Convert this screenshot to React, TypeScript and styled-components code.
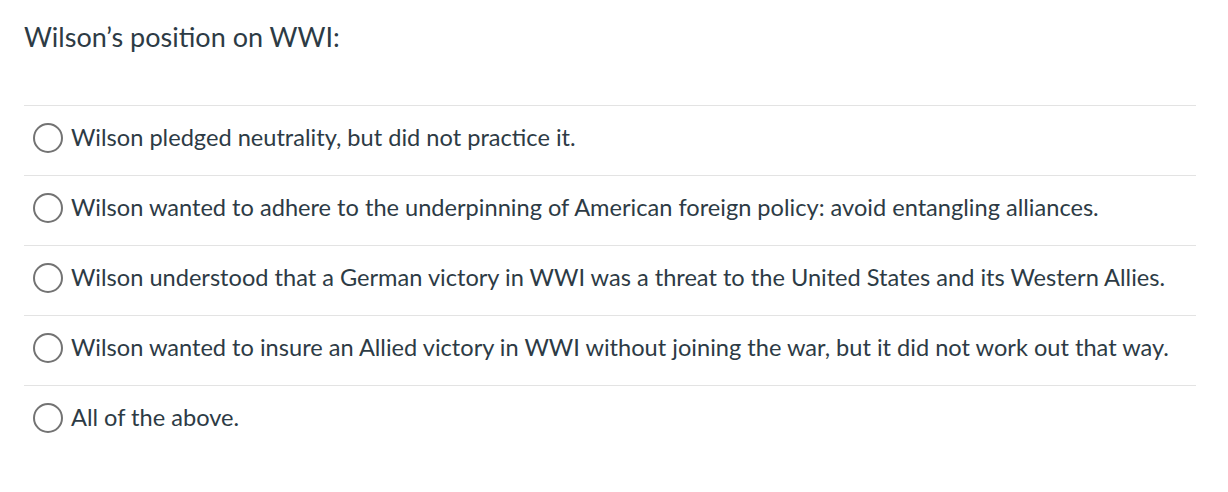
import React from 'react'
import styled, { createGlobalStyle } from 'styled-components'

const GlobalStyle = createGlobalStyle`
  body {
    margin: 0;
    background: #fff;
    font-family: Lato, "Liberation Sans", sans-serif;
    color: #2d3b45;
  }
`

const Page = styled.div`
  padding: 0 32px 0 24px;
`

const Title = styled.h2`
  margin: 0;
  padding-top: 19px;
  height: 105px;
  box-sizing: border-box;
  font-size: 27px;
  font-weight: 400;
  line-height: 36px;
`

const Answers = styled.div`
  display: flex;
  flex-direction: column;
`

const Answer = styled.label`
  display: flex;
  align-items: center;
  gap: 8px;
  height: 70px;
  border-top: 1px solid #e3e3e3;
  padding: 0 0 6px 9px;
  box-sizing: border-box;
  font-size: 23.6px;
  cursor: pointer;
`

const Radio = styled.span`
  width: 30px;
  height: 30px;
  box-sizing: border-box;
  border: 2px solid #737373;
  border-radius: 50%;
  flex-shrink: 0;
`

const AnswerText = styled.span`
  line-height: 28px;
  padding-bottom: 2px;
`

const answers = [
  'Wilson pledged neutrality, but did not practice it.',
  'Wilson wanted to adhere to the underpinning of American foreign policy: avoid entangling alliances.',
  'Wilson understood that a German victory in WWI was a threat to the United States and its Western Allies.',
  'Wilson wanted to insure an Allied victory in WWI without joining the war, but it did not work out that way.',
  'All of the above.',
]

const App = () => {
  return (
    <>
      <GlobalStyle />
      <Page>
        <Title>Wilson’s position on WWI:</Title>
        <Answers>
          {answers.map((a) => (
            <Answer key={a}>
              <Radio />
              <AnswerText>{a}</AnswerText>
            </Answer>
          ))}
        </Answers>
      </Page>
    </>
  )
}

export default App
